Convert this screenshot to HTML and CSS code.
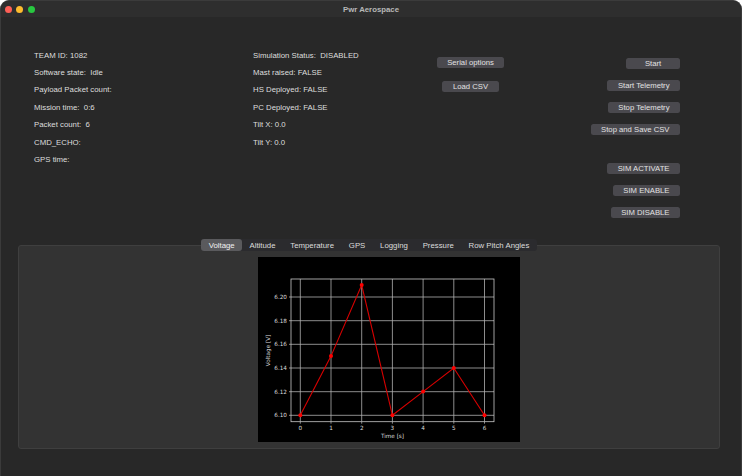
FILE: index.html
```html
<!DOCTYPE html>
<html lang="en">
<head>
    <meta charset="UTF-8">
    <meta name="viewport" content="width=device-width, initial-scale=1.0">
    <title>Pwr Aerospace</title>
    <link rel="stylesheet" href="styles.css">
</head>
<body>
    <div class="window">
        <header class="titlebar">
            <div class="lights">
                <span class="light close"></span>
                <span class="light minimize"></span>
                <span class="light zoom"></span>
            </div>
            <div class="title">Pwr Aerospace</div>
        </header>

        <main class="content">
            <section class="controls">
                <div class="info-col">
                    <p>TEAM ID: 1082</p>
                    <p>Software state:&nbsp; Idle</p>
                    <p>Payload Packet count:</p>
                    <p>Mission time:&nbsp; 0:6</p>
                    <p>Packet count:&nbsp; 6</p>
                    <p>CMD_ECHO:</p>
                    <p>GPS time:</p>
                </div>
                <div class="info-col status-col">
                    <p>Simulation Status:&nbsp; DISABLED</p>
                    <p>Mast raised: FALSE</p>
                    <p>HS Deployed: FALSE</p>
                    <p>PC Deployed: FALSE</p>
                    <p>Tilt X: 0.0</p>
                    <p>Tilt Y: 0.0</p>
                </div>
                <div class="file-col">
                    <button class="btn">Serial options</button>
                    <button class="btn">Load CSV</button>
                </div>
                <div class="cmd-col">
                    <button class="btn">Start</button>
                    <button class="btn">Start Telemetry</button>
                    <button class="btn">Stop Telemetry</button>
                    <button class="btn">Stop and Save CSV</button>
                    <button class="btn sim-first">SIM ACTIVATE</button>
                    <button class="btn">SIM ENABLE</button>
                    <button class="btn">SIM DISABLE</button>
                </div>
            </section>

            <section class="tabview">
                <nav class="tabbar">
                    <div class="tabs">
                        <button class="tab active">Voltage</button>
                        <button class="tab">Altitude</button>
                        <button class="tab">Temperature</button>
                        <button class="tab">GPS</button>
                        <button class="tab">Logging</button>
                        <button class="tab">Pressure</button>
                        <button class="tab">Row Pitch Angles</button>
                    </div>
                </nav>
                <div class="pane">
                    <svg class="chart" width="262" height="185" viewBox="0 0 262 185">
                        <rect x="0" y="0" width="262" height="185" fill="#000" />
                        <!-- grid -->
                        <g class="grid">
                            <line x1="42.3" y1="22" x2="42.3" y2="164.7" />
                            <line x1="73" y1="22" x2="73" y2="164.7" />
                            <line x1="103.7" y1="22" x2="103.7" y2="164.7" />
                            <line x1="134.4" y1="22" x2="134.4" y2="164.7" />
                            <line x1="165.1" y1="22" x2="165.1" y2="164.7" />
                            <line x1="195.8" y1="22" x2="195.8" y2="164.7" />
                            <line x1="226.5" y1="22" x2="226.5" y2="164.7" />
                            <line x1="33" y1="40" x2="236" y2="40" />
                            <line x1="33" y1="63.7" x2="236" y2="63.7" />
                            <line x1="33" y1="87.3" x2="236" y2="87.3" />
                            <line x1="33" y1="111" x2="236" y2="111" />
                            <line x1="33" y1="134.7" x2="236" y2="134.7" />
                            <line x1="33" y1="158.3" x2="236" y2="158.3" />
                        </g>
                        <rect class="frame" x="33" y="22" width="203" height="142.7" />
                        <!-- ticks -->
                        <g class="ticks">
                            <line x1="42.3" y1="164.7" x2="42.3" y2="166.7" />
                            <line x1="73" y1="164.7" x2="73" y2="166.7" />
                            <line x1="103.7" y1="164.7" x2="103.7" y2="166.7" />
                            <line x1="134.4" y1="164.7" x2="134.4" y2="166.7" />
                            <line x1="165.1" y1="164.7" x2="165.1" y2="166.7" />
                            <line x1="195.8" y1="164.7" x2="195.8" y2="166.7" />
                            <line x1="226.5" y1="164.7" x2="226.5" y2="166.7" />
                            <line x1="31" y1="40" x2="33" y2="40" />
                            <line x1="31" y1="63.7" x2="33" y2="63.7" />
                            <line x1="31" y1="87.3" x2="33" y2="87.3" />
                            <line x1="31" y1="111" x2="33" y2="111" />
                            <line x1="31" y1="134.7" x2="33" y2="134.7" />
                            <line x1="31" y1="158.3" x2="33" y2="158.3" />
                        </g>
                        <g class="ylabels">
                            <text x="29" y="42">6.20</text>
                            <text x="29" y="65.7">6.18</text>
                            <text x="29" y="89.3">6.16</text>
                            <text x="29" y="113">6.14</text>
                            <text x="29" y="136.7">6.12</text>
                            <text x="29" y="160.3">6.10</text>
                        </g>
                        <g class="xlabels">
                            <text x="42.3" y="173">0</text>
                            <text x="73" y="173">1</text>
                            <text x="103.7" y="173">2</text>
                            <text x="134.4" y="173">3</text>
                            <text x="165.1" y="173">4</text>
                            <text x="195.8" y="173">5</text>
                            <text x="226.5" y="173">6</text>
                        </g>
                        <text class="axis-title" x="134.5" y="181">Time [s]</text>
                        <text class="axis-title" transform="translate(12 93.4) rotate(-90)">Voltage [V]</text>
                        <!-- data -->
                        <polyline class="series" points="42.3,158.3 73,99.1 103.7,28.1 134.4,158.3 165.1,134.6 195.8,111 226.5,158.3" />
                        <g class="points">
                            <circle cx="42.3" cy="158.3" r="2" />
                            <circle cx="73" cy="99.1" r="2" />
                            <circle cx="103.7" cy="28.1" r="2" />
                            <circle cx="134.4" cy="158.3" r="2" />
                            <circle cx="165.1" cy="134.6" r="2" />
                            <circle cx="195.8" cy="111" r="2" />
                            <circle cx="226.5" cy="158.3" r="2" />
                        </g>
                    </svg>
                </div>
            </section>
        </main>
    </div>
</body>
</html>
```

FILE: styles.css
```css
html {
    background-color: #ffffff;
}

body {
    margin: 0;
    font-family: 'Liberation Sans', Arial, sans-serif;
    color: #dedede;
}

.window {
    box-sizing: border-box;
    height: 476px;
    background-color: #282828;
    border: 1px solid #3b3b3b;
    border-bottom: none;
    border-radius: 9px 9px 0 0;
    overflow: hidden;
}

/* Barra de titulo estilo macOS */
.titlebar {
    height: 16px;
    display: grid;
    grid-template-columns: 1fr auto 1fr;
    align-items: center;
    background-color: #2e2e2e;
}

.lights {
    display: flex;
    gap: 4.5px;
    padding-left: 3.5px;
}

.light {
    width: 7px;
    height: 7px;
    border-radius: 50%;
}

.light.close { background-color: #fe5f57; }
.light.minimize { background-color: #febc2e; }
.light.zoom { background-color: #28c840; }

.title {
    font-size: 7.8px;
    font-weight: bold;
    color: #b8b8b8;
}

/* Zona superior: etiquetas y botones */
.controls {
    display: flex;
    padding: 29.7px 61px 0 33px;
    height: 192px;
    box-sizing: border-box;
}

.info-col {
    width: 219px;
}

.info-col p {
    margin: 0;
    height: 17.4px;
    line-height: 17.4px;
    font-size: 7.8px;
    white-space: nowrap;
}

.status-col {
    width: 182px;
}

.file-col {
    width: 71px;
    display: flex;
    flex-direction: column;
    align-items: center;
    gap: 13px;
    padding-top: 10.6px;
}

.cmd-col {
    margin-left: auto;
    display: flex;
    flex-direction: column;
    align-items: flex-end;
    gap: 10.8px;
    padding-top: 11.6px;
}

.btn {
    height: 11px;
    min-width: 54px;
    padding: 0 10.5px;
    font-family: inherit;
    font-size: 7.7px;
    line-height: 11px;
    color: #e2e2e2;
    background-color: #4a494e;
    border: none;
    border-radius: 2.5px;
    white-space: nowrap;
}

.cmd-col .sim-first {
    margin-top: 17.5px;
}

/* Pestañas y grafica */
.tabview {
    margin: 0 21px 0 17px;
    padding-top: 30px;
}

.tabbar {
    position: relative;
    z-index: 1;
    display: flex;
    justify-content: center;
    height: 12px;
    margin-bottom: -6px;
}

.tabs {
    display: flex;
    background-color: #2b2b2e;
    border-radius: 3px;
}

.tab {
    height: 12px;
    padding: 0 7.4px;
    font-family: inherit;
    font-size: 7.8px;
    color: #dcdcdc;
    background: none;
    border: none;
    border-radius: 3px;
    white-space: nowrap;
}

.tab.active {
    background-color: #5a5a5d;
    color: #f0f0f0;
}

.pane {
    height: 204px;
    box-sizing: border-box;
    padding: 11px 0 6px 239px;
    background-color: #333333;
    border: 1px solid #3f3f3f;
    border-radius: 3px;
}

.chart {
    display: block;
}

.grid line,
.ticks line {
    stroke: #b0b0b0;
    stroke-width: 0.8;
}

.frame {
    fill: none;
    stroke: #c8c8c8;
    stroke-width: 0.8;
}

.ylabels text {
    font-family: 'DejaVu Sans', sans-serif;
    font-size: 5.7px;
    fill: #dddddd;
    text-anchor: end;
}

.xlabels text,
.axis-title {
    font-family: 'DejaVu Sans', sans-serif;
    font-size: 5.7px;
    fill: #dddddd;
    text-anchor: middle;
}

.series {
    fill: none;
    stroke: #d80000;
    stroke-width: 1.1;
}

.points circle {
    fill: #ff0000;
}
```
